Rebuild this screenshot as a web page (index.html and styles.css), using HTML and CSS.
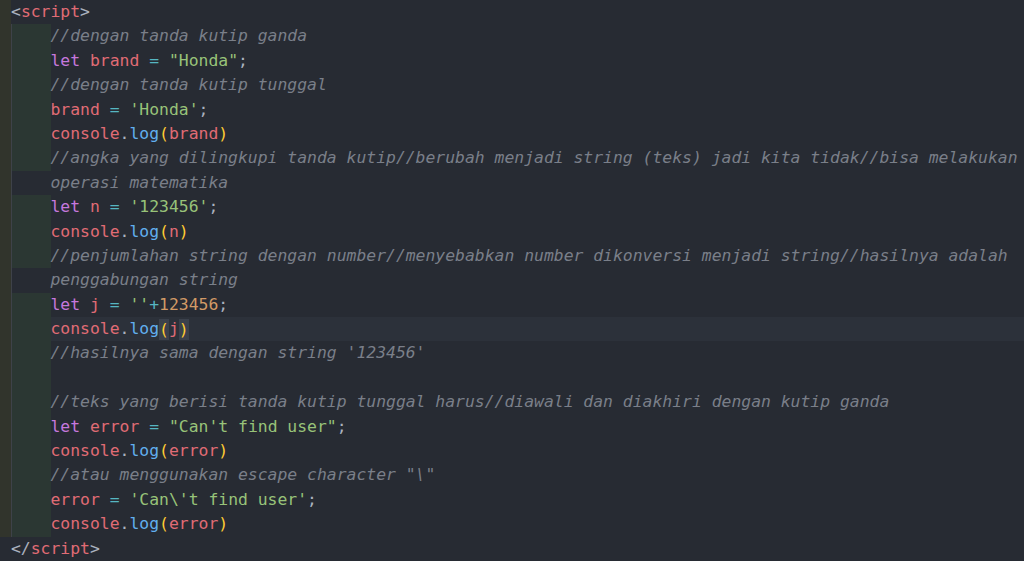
FILE: index.html
```html
<!DOCTYPE html>
<html lang="id">
<head>
<meta charset="utf-8">
<title>script</title>
<link rel="stylesheet" href="styles.css">
</head>
<body>
<div class="editor">
  <div class="row"><span class="strip"></span><span class="code"><span class="p">&lt;</span><span class="v">script</span><span class="p">&gt;</span></span></div>
  <div class="row"><span class="strip"></span><span class="indent"></span><span class="code"><span class="c">//dengan tanda kutip ganda</span></span></div>
  <div class="row"><span class="strip"></span><span class="indent"></span><span class="code"><span class="k">let</span> <span class="v">brand</span> <span class="o">=</span> <span class="s">"Honda"</span><span class="p">;</span></span></div>
  <div class="row"><span class="strip"></span><span class="indent"></span><span class="code"><span class="c">//dengan tanda kutip tunggal</span></span></div>
  <div class="row"><span class="strip"></span><span class="indent"></span><span class="code"><span class="v">brand</span> <span class="o">=</span> <span class="s">'Honda'</span><span class="p">;</span></span></div>
  <div class="row"><span class="strip"></span><span class="indent"></span><span class="code"><span class="v">console</span><span class="p">.</span><span class="f">log</span><span class="b">(</span><span class="v">brand</span><span class="b">)</span></span></div>
  <div class="row"><span class="strip"></span><span class="indent"></span><span class="code"><span class="c">//angka yang dilingkupi tanda kutip//berubah menjadi string (teks) jadi kita tidak//bisa melakukan</span></span></div>
  <div class="row"><span class="strip"></span><span class="indent wrap"></span><span class="code"><span class="c">operasi matematika</span></span></div>
  <div class="row"><span class="strip"></span><span class="indent"></span><span class="code"><span class="k">let</span> <span class="v">n</span> <span class="o">=</span> <span class="s">'123456'</span><span class="p">;</span></span></div>
  <div class="row"><span class="strip"></span><span class="indent"></span><span class="code"><span class="v">console</span><span class="p">.</span><span class="f">log</span><span class="b">(</span><span class="v">n</span><span class="b">)</span></span></div>
  <div class="row"><span class="strip"></span><span class="indent"></span><span class="code"><span class="c">//penjumlahan string dengan number//menyebabkan number dikonversi menjadi string//hasilnya adalah</span></span></div>
  <div class="row"><span class="strip"></span><span class="indent wrap"></span><span class="code"><span class="c">penggabungan string</span></span></div>
  <div class="row"><span class="strip"></span><span class="indent"></span><span class="code"><span class="k">let</span> <span class="v">j</span> <span class="o">=</span> <span class="s">''</span><span class="o">+</span><span class="n">123456</span><span class="p">;</span></span></div>
  <div class="row current"><span class="strip"></span><span class="indent"></span><span class="code"><span class="v">console</span><span class="p">.</span><span class="f">log</span><span class="b match">(</span><span class="v">j</span><span class="b match">)</span></span></div>
  <div class="row"><span class="strip"></span><span class="indent"></span><span class="code"><span class="c">//hasilnya sama dengan string '123456'</span></span></div>
  <div class="row"><span class="strip"></span><span class="indent"></span><span class="code"></span></div>
  <div class="row"><span class="strip"></span><span class="indent"></span><span class="code"><span class="c">//teks yang berisi tanda kutip tunggal harus//diawali dan diakhiri dengan kutip ganda</span></span></div>
  <div class="row"><span class="strip"></span><span class="indent"></span><span class="code"><span class="k">let</span> <span class="v">error</span> <span class="o">=</span> <span class="s">"Can't find user"</span><span class="p">;</span></span></div>
  <div class="row"><span class="strip"></span><span class="indent"></span><span class="code"><span class="v">console</span><span class="p">.</span><span class="f">log</span><span class="b">(</span><span class="v">error</span><span class="b">)</span></span></div>
  <div class="row"><span class="strip"></span><span class="indent"></span><span class="code"><span class="c">//atau menggunakan escape character "\"</span></span></div>
  <div class="row"><span class="strip"></span><span class="indent"></span><span class="code"><span class="v">error</span> <span class="o">=</span> <span class="s">'Can\'t find user'</span><span class="p">;</span></span></div>
  <div class="row"><span class="strip"></span><span class="indent"></span><span class="code"><span class="v">console</span><span class="p">.</span><span class="f">log</span><span class="b">(</span><span class="v">error</span><span class="b">)</span></span></div>
  <div class="row"><span class="strip plain"></span><span class="code"><span class="p">&lt;/</span><span class="v">script</span><span class="p">&gt;</span></span></div>
</div>
</body>
</html>
```

FILE: styles.css
```css
html, body {
  margin: 0;
  padding: 0;
  background: #272b33;
}

.editor {
  display: flex;
  flex-direction: column;
  font-family: "DejaVu Sans Mono", "Liberation Mono", monospace;
  font-size: 16.4px;
  color: #abb2bf;
  width: 1024px;
  height: 561px;
  overflow: hidden;
}

.row {
  display: flex;
  height: 24.4px;
  line-height: 24.4px;
  flex: none;
}

.strip {
  width: 11px;
  flex: none;
  background: #31342c;
}

.strip.plain {
  background: transparent;
}

.indent {
  width: 38.5px;
  flex: none;
  border-left: 1px solid #3e4249;
  background: #2b3733;
}

.indent.wrap {
  background: transparent;
}

.code {
  flex: 1;
  white-space: pre;
}

.current .code {
  background: #2c313a;
}

.c { color: #7a7f89; font-style: italic; }
.k { color: #c678dd; }
.v { color: #e06c75; }
.o { color: #56b6c2; }
.s { color: #98c379; }
.n { color: #d19a66; }
.f { color: #61afef; }
.p { color: #abb2bf; }
.b { color: #ffcc33; }

.match {
  background: #3b414c;
  display: inline-block;
  height: 21px;
  line-height: 21px;
  vertical-align: top;
  margin-top: 2px;
}
```
